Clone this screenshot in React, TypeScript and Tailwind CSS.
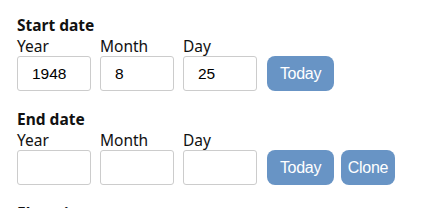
import React from 'react';

type DateFieldsProps = {
  title: string;
  values: [string, string, string];
  showClone?: boolean;
};

const DateFields: React.FC<DateFieldsProps> = ({ title, values, showClone }) => {
  const labels = ['Year', 'Month', 'Day'];
  return (
    <div className="mb-[18px]">
      <h3 className="font-bold text-[15.5px] leading-[21px] h-[21px]">{title}</h3>
      <div className="flex items-end gap-[9px]">
        {labels.map((label, i) => (
          <div key={label} className="flex flex-col">
            <label className="text-[15.5px] leading-[20px] h-[20px]">{label}</label>
            <input
              defaultValue={values[i]}
              className="w-[74px] h-[35px] border border-[#cccccc] rounded-[3px] px-[14px] text-[15.5px] text-black outline-none font-['Liberation_Sans',Arial,sans-serif]"
            />
          </div>
        ))}
        <button className="w-[67px] h-[35px] rounded-[8px] bg-[#6894c5] text-white text-[16px] tracking-[-0.3px] font-['Liberation_Sans',Arial,sans-serif] ml-[1px]">
          Today
        </button>
        {showClone && (
          <button className="w-[54px] h-[35px] -ml-[2px] rounded-[8px] bg-[#6894c5] text-white text-[16px] tracking-[-0.3px] font-['Liberation_Sans',Arial,sans-serif]">
            Clone
          </button>
        )}
      </div>
    </div>
  );
};

export default function App() {
  return (
    <div className="bg-white w-[443px] h-[208px] overflow-hidden px-[17px] pt-[15px] text-[#111] font-['Noto_Sans',sans-serif]">
      <DateFields title="Start date" values={['1948', '8', '25']} />
      <DateFields title="End date" values={['', '', '']} showClone />
      <h3 className="font-bold text-[15.5px] leading-[21px]">Elevation</h3>
    </div>
  );
}
